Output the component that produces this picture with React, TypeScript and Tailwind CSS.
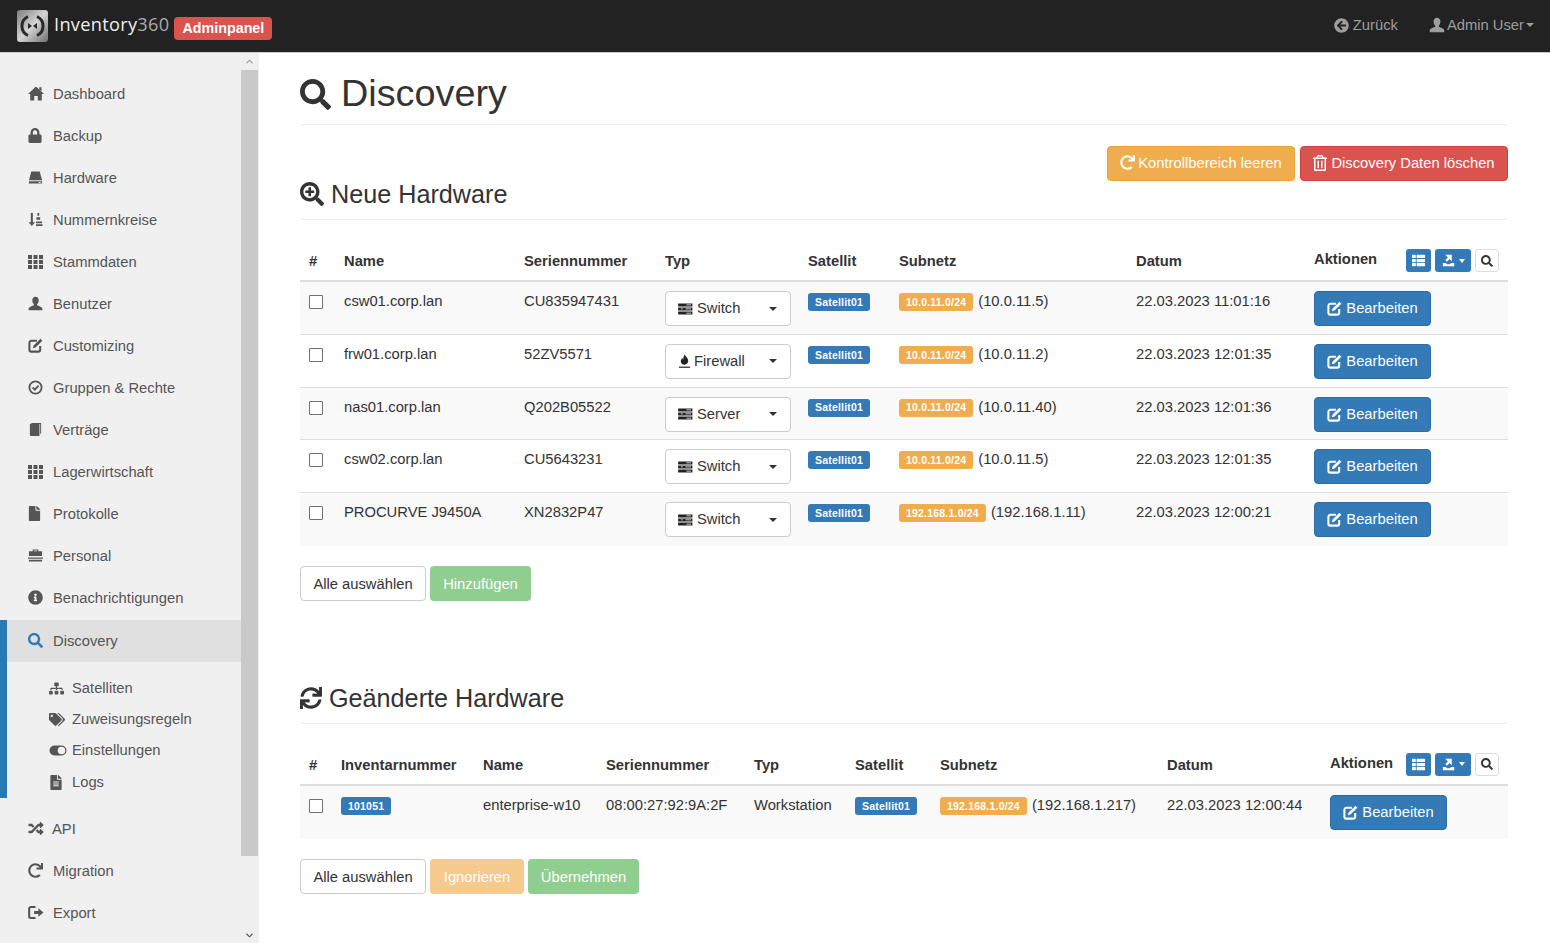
import React from "react";
import {
  FaLock, FaFile, FaInfoCircle, FaSearch,
  FaSitemap, FaTags, FaFileAlt, FaRandom, FaRedo, FaSync, FaSearchPlus, FaRegTrashAlt,
  FaArrowCircleLeft, FaThList,
} from "react-icons/fa";

type P = { className?: string };

const Home = ({ className = "" }: P) => (
  <svg viewBox="0 0 16 15" className={className} fill="currentColor">
    <path d="M8 .5L16 8h-2.200v6.500H9.800V10H6.200v4.500H2.200V8H0z" />
    <path d="M11.300 1.200h2.200v4.200l-2.200-2.100z" />
  </svg>
);
const User = ({ className = "" }: P) => (
  <svg viewBox="0 0 16 16" className={className} fill="currentColor">
    <path d="M8 .8c2.300 0 3.400 1.700 3.400 3.900 0 1.700-.7 3.100-1.600 3.800v1.300c1 .7 5.500 1.500 5.500 3.800v1.600H.7v-1.600c0-2.300 4.500-3.100 5.500-3.800V8.500C5.300 7.800 4.600 6.400 4.600 4.700 4.600 2.500 5.700.8 8 .8z" />
  </svg>
);
const Grid = ({ className = "" }: P) => (
  <svg viewBox="0 0 15 15" className={className} fill="currentColor">
    <path d="M0 1h4v4H0zM5.500 1h4v4h-4zM11 1h4v4h-4zM0 6h4v4H0zM5.500 6h4v4h-4zM11 6h4v4h-4zM0 11h4v4H0zM5.500 11h4v4h-4zM11 11h4v4h-4z" />
  </svg>
);
const Edit = ({ className = "" }: P) => (
  <svg viewBox="0 0 16 16" className={className}>
    <path d="M9.500 3H3.500A2 2 0 0 0 1.500 5v7.500a2 2 0 0 0 2 2H11a2 2 0 0 0 2-2V8.500" fill="none" stroke="currentColor" strokeWidth="2.200" />
    <path d="M13.300.8l2 2-7.300 7.300-2.800.8.800-2.800z" fill="currentColor" />
  </svg>
);
const OkCircle = ({ className = "" }: P) => (
  <svg viewBox="0 0 16 16" className={className} fill="none" stroke="currentColor">
    <circle cx="8" cy="8" r="6.500" strokeWidth="1.900" />
    <path d="M5 8l2.300 2.300L11.300 6" strokeWidth="2" />
  </svg>
);
const Briefcase = ({ className = "" }: P) => (
  <svg viewBox="0 0 16 15" className={className} fill="currentColor">
    <path fillRule="evenodd" d="M5 3V1h6v2h4v5H1V3zM6.300 2.200V3h3.400v-.8z" />
    <path d="M0 9.500h16V11H0zM1 12h14v1.800H1z" />
  </svg>
);
const LogOut = ({ className = "" }: P) => (
  <svg viewBox="0 0 17 16" className={className}>
    <path d="M8 2.200H3A1.800 1.800 0 0 0 1.200 4v8A1.800 1.800 0 0 0 3 13.800h5" fill="none" stroke="currentColor" strokeWidth="2.200" />
    <path d="M6.500 6.300h4.500V3.500L16.500 8 11 12.500V9.700H6.500z" fill="currentColor" />
  </svg>
);
const Hdd = ({ className = "" }: P) => (
  <svg viewBox="0 0 16 16" className={className} fill="currentColor">
    <path d="M3.500 1.500h9L15 11H1z" />
    <path d="M1 12h14v2.500H1zM11.500 12.800h2v1h-2z" fillRule="evenodd" />
  </svg>
);
const SortAttr = ({ className = "" }: P) => (
  <svg viewBox="0 0 16 16" className={className} fill="currentColor">
    <path d="M3 1h2.200v10h2.300L4.100 15 .6 11H3z" />
    <path d="M10 1h2v3h-2zM9 5.500h4v2.800H9zM8.500 10h6.500v1.900H8.500zM8.500 13h7v1.900h-7z" />
  </svg>
);
const Book = ({ className = "" }: P) => (
  <svg viewBox="0 0 16 16" className={className} fill="currentColor">
    <path d="M3.500 1H14v11.500h-1V2H4.500C3.600 2 3.500 2.500 3.500 3zM2 3c0-1 .7-1.200 1.500-1.200h8.700V15H3.500C2.700 15 2 14.500 2 13.700z" />
  </svg>
);
const Toggle = ({ className = "" }: P) => (
  <svg viewBox="0 0 18 12" className={className}>
    <rect x="0.500" y="1" width="17" height="10" rx="5" fill="currentColor" />
    <circle cx="12.500" cy="6" r="3.800" fill="#f0f0f0" />
  </svg>
);
const Rack = ({ className = "" }: P) => (
  <svg viewBox="0 0 16 13" className={className} fill="currentColor">
    <path d="M0 .5h15.500v3.200H0zM0 4.800h15.500v3.400H0zM0 9.300h15.500v3.200H0z" />
    <path d="M9 1.600h5v.9H9zM3 6h2v.9H3zM8 6h6v.9H8zM9 10.500h5v.9H9z" fill="#fff" />
  </svg>
);
const Fire = ({ className = "" }: P) => (
  <svg viewBox="0 0 14 16" className={className} fill="currentColor">
    <path d="M7.500.5c.4 2.200 3.500 3.700 3.500 6.800 0 2.300-1.700 4.200-4 4.200s-4-1.700-4-3.800c0-1.600 1-2.600 1.800-3.400.2 1 .5 1.500 1 1.800C5.400 4 6.300 2 7.500.5z" />
    <path d="M1 13.500h12v1.300H1z" />
  </svg>
);
const Export = ({ className = "" }: P) => (
  <svg viewBox="0 0 16 16" className={className} fill="currentColor">
    <path d="M5 2h8v8l-2.700-2.700-3.200 3.200-2-2 3.200-3.200z" transform="translate(-1 -1)" />
    <path d="M1 11h4l1 1.500h4l1-1.500h4v4H1z" />
  </svg>
);
const Logo = () => (
  <svg viewBox="0 0 31 32" className="w-[31px] h-[32px] shrink-0">
    <defs>
      <linearGradient id="lg" x1="0" y1="0" x2="1" y2="1">
        <stop offset="0" stopColor="#7e7e7e" />
        <stop offset="0.5" stopColor="#d4d4d4" />
        <stop offset="1" stopColor="#6f6f6f" />
      </linearGradient>
    </defs>
    <rect x="0" y="0" width="31" height="32" rx="3" fill="url(#lg)" />
    <path d="M11 6.500a10.500 10.500 0 0 0 0 19M20 6.500a10.500 10.500 0 0 1 0 19" fill="none" stroke="#2a2a2a" strokeWidth="3" />
    <path d="M11 13l4 3-4 3zM20 13l-4 3 4 3z" fill="#2a2a2a" />
  </svg>
);

type Ic = React.ComponentType<P>;

const NavItem = ({ icon: I, label, iconCls = "w-[15px] h-[15px]", gap = "w-[25px]" }: { icon: Ic; label: string; iconCls?: string; gap?: string }) => (
  <div className="h-[42.080px] flex items-center pl-[28px] text-[#555]">
    <span className={`${gap} flex items-center shrink-0 -mt-[2px]`}><I className={iconCls} /></span>
    <span>{label}</span>
  </div>
);

const SubItem = ({ icon: I, label, iconCls = "w-[15px] h-[15px]" }: { icon: Ic; label: string; iconCls?: string }) => (
  <div className="h-[31.400px] flex items-center pl-[49px] text-[#555]">
    <span className="w-[23px] flex items-center shrink-0"><I className={iconCls} /></span>
    <span>{label}</span>
  </div>
);

const Checkbox = () => (
  <input type="checkbox" className="appearance-none block w-[14px] h-[14px] bg-white border-[1.500px] border-[#707070] rounded-[1px]" />
);

const Badge = ({ children, color }: { children: React.ReactNode; color: "blue" | "orange" }) => (
  <span className={`inline-flex items-center justify-center h-[18px] px-[7px] rounded-[3px] text-white font-bold text-[10.500px] leading-none tracking-[0.2px] ${color === "blue" ? "bg-[#337ab7]" : "bg-[#f0ad4e]"}`}>
    {children}
  </span>
);

const EditBtn = () => (
  <button className="h-[35px] w-[117px] flex items-center justify-center gap-[4px] rounded-[4px] bg-[#337ab7] border border-[#2e6da4] text-white">
    <Edit className="w-[15px] h-[15px]" /> Bearbeiten
  </button>
);

const Tools = () => (
  <div className="flex items-center gap-[4px]">
    <span className="w-[25px] h-[23px] rounded-[3px] bg-[#337ab7] text-white flex items-center justify-center"><FaThList className="w-[13px] h-[13px]" /></span>
    <span className="w-[36px] h-[23px] rounded-[3px] bg-[#337ab7] text-white flex items-center justify-center gap-[4px]">
      <Export className="w-[13px] h-[13px]" />
      <span className="w-0 h-0 border-x-[3.500px] border-x-transparent border-t-[4px] border-t-white" />
    </span>
    <span className="w-[24px] h-[23px] rounded-[3px] bg-white border border-[#ddd] text-[#333] flex items-center justify-center"><FaSearch className="w-[12px] h-[12px]" /></span>
  </div>
);

const TypeSelect = ({ kind }: { kind: "Switch" | "Firewall" | "Server" }) => (
  <div className="h-[35px] w-[126px] flex items-center pl-[12px] pr-[13px] bg-white border border-[#ccc] rounded-[4px] text-[#333]">
    {kind === "Firewall" ? <Fire className="w-[13px] h-[15px] mr-[3px] text-[#222]" /> : <Rack className="w-[15px] h-[12px] mr-[4px] text-[#222]" />}
    <span>{kind}</span>
    <span className="ml-auto w-0 h-0 border-x-[4px] border-x-transparent border-t-[4px] border-t-[#333]" />
  </div>
);

const firstCols = "grid-cols-[35px_180px_141px_143px_91px_237px_178px_1fr]";
const secondCols = "grid-cols-[32px_142px_123px_148px_101px_85px_227px_163px_1fr]";

const rows = [
  { name: "csw01.corp.lan", sn: "CU835947431", kind: "Switch", net: "10.0.11.0/24", ip: "(10.0.11.5)", d: "22.03.2023 11:01:16" },
  { name: "frw01.corp.lan", sn: "52ZV5571", kind: "Firewall", net: "10.0.11.0/24", ip: "(10.0.11.2)", d: "22.03.2023 12:01:35" },
  { name: "nas01.corp.lan", sn: "Q202B05522", kind: "Server", net: "10.0.11.0/24", ip: "(10.0.11.40)", d: "22.03.2023 12:01:36" },
  { name: "csw02.corp.lan", sn: "CU5643231", kind: "Switch", net: "10.0.11.0/24", ip: "(10.0.11.5)", d: "22.03.2023 12:01:35" },
  { name: "PROCURVE J9450A", sn: "XN2832P47", kind: "Switch", net: "192.168.1.0/24", ip: "(192.168.1.11)", d: "22.03.2023 12:00:21" },
] as const;

const Th = ({ children }: { children?: React.ReactNode }) => <div className="pl-[9px] pb-[8px] font-bold text-[#333] self-end">{children}</div>;
const Td = ({ children }: { children?: React.ReactNode }) => <div className="pl-[9px] pt-[9px]">{children}</div>;

export default function App() {
  return (
    <div className="h-screen overflow-hidden flex flex-col bg-white text-[14.750px] leading-[21px] text-[#333] font-['Liberation_Sans',Arial,sans-serif]">
      <header className="h-[53px] shrink-0 bg-[#222] border-b border-[#ccc] flex items-center pl-[17px] pr-[16px]">
        <Logo />
        <span className="ml-[6px] -mt-[3px] text-[18.200px] text-[#eee] font-['Open_Sans',sans-serif] tracking-[0.3px]">Inventory<span className="text-[#aaa]">360</span></span>
        <span className="ml-[5px] mt-[5px] h-[23px] px-[8px] rounded-[4px] bg-[#d9534f] text-white font-bold text-[14.300px] flex items-center">Adminpanel</span>
        <div className="ml-auto -mt-[2px] flex items-center text-[#9d9d9d]">
          <FaArrowCircleLeft className="w-[15px] h-[15px] mr-[4px]" />
          <span>Zurück</span>
          <User className="w-[16px] h-[16px] ml-[31px] mr-[2px]" />
          <span>Admin User</span>
          <span className="ml-[2px] w-0 h-0 border-x-[4px] border-x-transparent border-t-[4px] border-t-[#9d9d9d]" />
        </div>
      </header>

      <div className="flex flex-1 min-h-0">
        <aside className="w-[259px] shrink-0 flex bg-[#f0f0f0]">
          <nav className="w-[241px] shrink-0 pt-[20px]">
            <NavItem icon={Home} label="Dashboard" iconCls="w-[16px] h-[15px]" />
            <NavItem icon={FaLock} label="Backup" iconCls="w-[14px] h-[15px]" />
            <NavItem icon={Hdd} label="Hardware" />
            <NavItem icon={SortAttr} label="Nummernkreise" />
            <NavItem icon={Grid} label="Stammdaten" />
            <NavItem icon={User} label="Benutzer" />
            <NavItem icon={Edit} label="Customizing" />
            <NavItem icon={OkCircle} label="Gruppen & Rechte" />
            <NavItem icon={Book} label="Verträge" />
            <NavItem icon={Grid} label="Lagerwirtschaft" />
            <NavItem icon={FaFile} label="Protokolle" iconCls="w-[13px] h-[15px]" />
            <NavItem icon={Briefcase} label="Personal" />
            <NavItem icon={FaInfoCircle} label="Benachrichtigungen" />
            <div className="border-l-[7px] border-[#2a78b4]">
              <div className="h-[42px] flex items-center pl-[21px] bg-[#e0e0e0] text-[#555]">
                <span className="w-[25px] flex items-center shrink-0 -mt-[2px]"><FaSearch className="w-[15px] h-[15px] text-[#2a7ab5]" /></span>
                <span>Discovery</span>
              </div>
              <div className="pt-[10.500px] -ml-[7px]">
                <SubItem icon={FaSitemap} label="Satelliten" />
                <SubItem icon={FaTags} label="Zuweisungsregeln" iconCls="w-[16px] h-[15px]" />
                <SubItem icon={Toggle} label="Einstellungen" iconCls="w-[18px] h-[13px]" />
                <SubItem icon={FaFileAlt} label="Logs" iconCls="w-[14px] h-[15px]" />
              </div>
            </div>
            <div className="pt-[10px]">
              <NavItem icon={FaRandom} label="API" gap="w-[24px]" iconCls="w-[16px] h-[15px]" />
              <NavItem icon={FaRedo} label="Migration" />
              <NavItem icon={LogOut} label="Export" iconCls="w-[16px] h-[15px]" />
            </div>
          </nav>
          <div className="w-[17px] shrink-0 flex flex-col">
            <div className="h-[17px] flex items-center justify-center text-[#a0a0a0] text-[10px] leading-none">
              <svg viewBox="0 0 8 5" className="w-[7px] h-[5px]"><path d="M.5 4.500L4 1l3.500 3.500" fill="none" stroke="currentColor" strokeWidth="1.300" /></svg>
            </div>
            <div className="h-[786px] bg-[#c9c9c9]" />
            <div className="flex-1 flex items-end justify-center pb-[5px] text-[#555]">
              <svg viewBox="0 0 8 5" className="w-[7px] h-[5px]"><path d="M.5.500L4 4 7.500.500" fill="none" stroke="currentColor" strokeWidth="1.300" /></svg>
            </div>
          </div>
        </aside>

        <main className="flex-1 min-w-0 pl-[41px] pr-[42px]">
          <div className="h-[72px] border-b border-[#eee] flex items-center">
            <FaSearch className="w-[31px] h-[31px] text-[#333] mr-[11px] mt-[11px]" />
            <h1 className="-ml-[1px] text-[37.800px] leading-[42px] mt-[8px] text-[#333]">Discovery</h1>
          </div>

          <div className="h-[95px] flex justify-between border-b border-[#eee]">
            <h2 className="self-end flex items-center text-[25.200px] leading-[28px] pb-[11px]">
              <FaSearchPlus className="w-[24px] h-[24px] mr-[7px]" />Neue Hardware
            </h2>
            <div className="flex gap-[5px] mt-[21px] self-start">
              <button className="h-[35px] w-[188px] flex items-center justify-center gap-[3px] rounded-[4px] bg-[#f0ad4e] border border-[#eea236] text-white">
                <FaRedo className="w-[15px] h-[15px] -mt-[2px]" /> Kontrollbereich leeren
              </button>
              <button className="h-[35px] w-[208px] flex items-center justify-center gap-[4px] rounded-[4px] bg-[#d9534f] border border-[#d43f3a] text-white">
                <FaRegTrashAlt className="w-[14px] h-[16px] -mt-[2px]" /> Discovery Daten löschen
              </button>
            </div>
          </div>

          <div className={`mt-[20px] h-[42px] grid ${firstCols} border-b-2 border-[#ddd]`}>
            <Th>#</Th><Th>Name</Th><Th>Seriennummer</Th><Th>Typ</Th><Th>Satellit</Th><Th>Subnetz</Th><Th>Datum</Th>
            <div className="pl-[9px] pb-[8px] self-end flex items-center font-bold">
              <span className="-mt-[3px]">Aktionen</span>
              <span className="ml-[29px]"><Tools /></span>
            </div>
          </div>
          {rows.map((r, i) => (
            <div key={r.name} className={`h-[52.750px] grid ${firstCols} ${i % 2 === 0 ? "bg-[#f9f9f9]" : "bg-white"} ${i < rows.length - 1 ? "border-b border-[#ddd]" : ""}`}>
              <div className="pl-[9px] pt-[13px]"><Checkbox /></div>
              <Td>{r.name}</Td>
              <Td>{r.sn}</Td>
              <div className="pl-[9px] pt-[9px]"><TypeSelect kind={r.kind} /></div>
              <div className="pl-[9px] pt-[12px]"><div className="-mt-[1px] flex"><Badge color="blue">Satellit01</Badge></div></div>
              <div className="pl-[9px] pt-[9px] flex items-start gap-[5px]">
                <span className="flex mt-[2px]"><Badge color="orange">{r.net}</Badge></span>
                <span>{r.ip}</span>
              </div>
              <Td>{r.d}</Td>
              <div className="pl-[9px] pt-[9px]"><EditBtn /></div>
            </div>
          ))}

          <div className="mt-[20px] flex gap-[4px]">
            <button className="h-[35px] w-[126px] pt-[2px] rounded-[4px] bg-white border border-[#ccc] text-[#333]">Alle auswählen</button>
            <button className="h-[35px] w-[101px] pt-[2px] rounded-[4px] bg-[#8fce8f] text-white">Hinzufügen</button>
          </div>

          <div className="mt-[73px] h-[50px] border-b border-[#eee] flex items-start">
            <h2 className="flex items-center text-[25.200px] leading-[28px] pt-[10px]">
              <FaSync className="w-[22px] h-[22px] mr-[7px]" />Geänderte Hardware
            </h2>
          </div>

          <div className={`mt-[20px] h-[42px] grid ${secondCols} border-b-2 border-[#ddd]`}>
            <Th>#</Th><Th>Inventarnummer</Th><Th>Name</Th><Th>Seriennummer</Th><Th>Typ</Th><Th>Satellit</Th><Th>Subnetz</Th><Th>Datum</Th>
            <div className="pl-[9px] pb-[8px] self-end flex items-center font-bold">
              <span className="-mt-[2px]">Aktionen</span>
              <span className="ml-[13px]"><Tools /></span>
            </div>
          </div>
          <div className={`h-[53px] grid ${secondCols} bg-[#f9f9f9]`}>
            <div className="pl-[9px] pt-[13px]"><Checkbox /></div>
            <div className="pl-[9px] pt-[11px]"><div className="flex"><Badge color="blue">101051</Badge></div></div>
            <Td>enterprise-w10</Td>
            <Td>08:00:27:92:9A:2F</Td>
            <Td>Workstation</Td>
            <div className="pl-[9px] pt-[11px]"><div className="flex"><Badge color="blue">Satellit01</Badge></div></div>
            <div className="pl-[9px] pt-[9px] flex items-start gap-[5px]">
              <span className="flex mt-[2px]"><Badge color="orange">192.168.1.0/24</Badge></span>
              <span>(192.168.1.217)</span>
            </div>
            <Td>22.03.2023 12:00:44</Td>
            <div className="pl-[9px] pt-[9px]"><EditBtn /></div>
          </div>

          <div className="mt-[20px] flex gap-[4px]">
            <button className="h-[35px] w-[126px] pt-[2px] rounded-[4px] bg-white border border-[#ccc] text-[#333]">Alle auswählen</button>
            <button className="h-[35px] w-[94px] pt-[2px] rounded-[4px] bg-[#f6c98c] text-white">Ignorieren</button>
            <button className="h-[35px] w-[111px] pt-[2px] rounded-[4px] bg-[#8fce8f] text-white">Übernehmen</button>
          </div>
        </main>
      </div>
    </div>
  );
}
